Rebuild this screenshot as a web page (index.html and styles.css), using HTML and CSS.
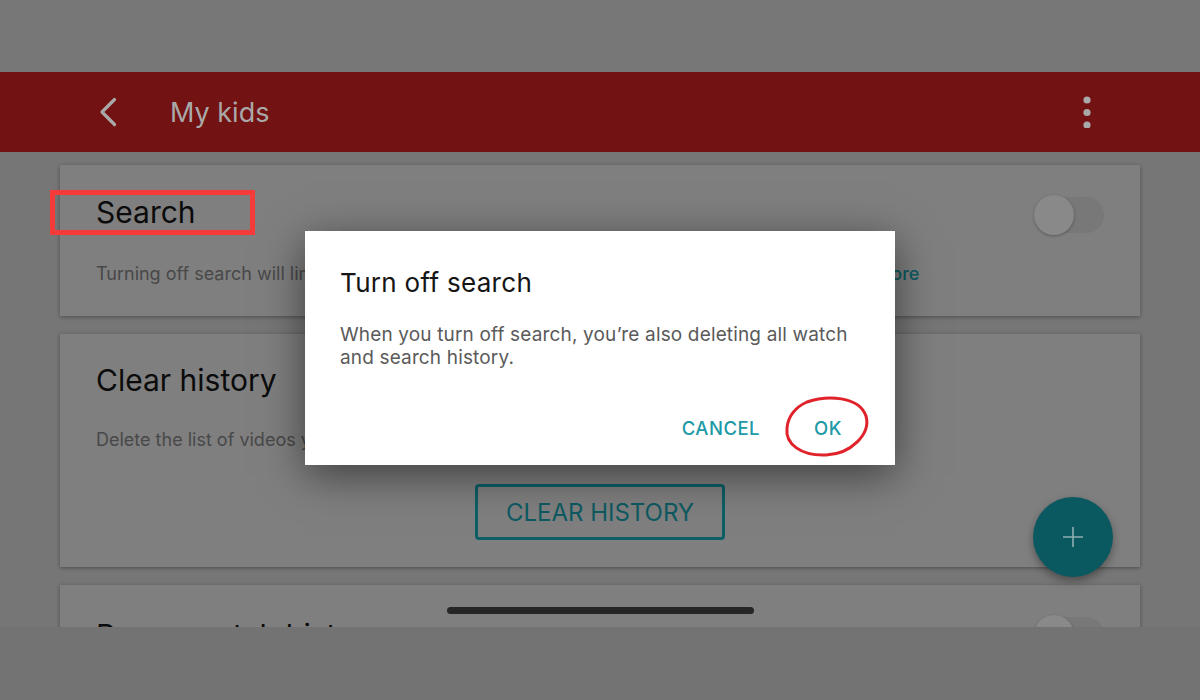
FILE: index.html
```html
<!DOCTYPE html>
<html lang="en">
<head>
    <meta charset="UTF-8">
    <meta name="viewport" content="width=device-width, initial-scale=1.0">
    <title>My kids</title>
    <link rel="stylesheet" href="styles.css">
</head>
<body>
    <div class="status"></div>

    <div class="screen">
        <header class="appbar">
            <svg class="back" viewBox="0 0 20 30" width="20" height="30">
                <path d="M16.5 2.5 L4 15 L16.5 27.5" fill="none" stroke="currentColor" stroke-width="3.2" stroke-linecap="round" stroke-linejoin="round"/>
            </svg>
            <h1>My kids</h1>
            <svg class="menu" viewBox="0 0 8 32" width="8" height="32">
                <circle cx="4" cy="4" r="3.6" fill="currentColor"/>
                <circle cx="4" cy="16.5" r="3.6" fill="currentColor"/>
                <circle cx="4" cy="29" r="3.6" fill="currentColor"/>
            </svg>
        </header>

        <main class="cards">
            <section class="card">
                <div class="card-head">
                    <h2 class="card-title">Search<span class="mark-box"></span></h2>
                    <div class="toggle"></div>
                </div>
                <p class="card-desc">Turning off search will limit your child to a smaller set of recommended videos alone. <span class="link">Learn more</span></p>
            </section>

            <section class="card card-history">
                <h2 class="card-title">Clear history</h2>
                <p class="card-desc">Delete the list of videos your child has watched and searched for.</p>
                <button class="outline-btn">CLEAR HISTORY</button>
            </section>

            <section class="card card-pause">
                <div class="card-head">
                    <h2 class="card-title">Pause watch history</h2>
                    <div class="toggle"></div>
                </div>
                <p class="card-desc">Videos your child watches won't be added to their watch history.</p>
            </section>
        </main>

        <button class="fab">
            <svg viewBox="0 0 22 22" width="22" height="22">
                <path d="M11 1 V21 M1 11 H21" stroke="currentColor" stroke-width="1.6"/>
            </svg>
        </button>

        <div class="home-bar"></div>

        <div class="dialog">
            <h2>Turn off search</h2>
            <p>When you turn off search, you’re also deleting all watch and search history.</p>
            <div class="actions">
                <button>CANCEL</button>
                <button class="ok">OK
                    <svg class="mark-ring" viewBox="0 0 90 66" width="90" height="66">
                        <path d="M24 8 C44 1, 76 2, 83 22 C88 40, 68 60, 43 61 C18 62, 2 50, 4 34 C5 22, 13 13, 23 8.5" fill="none" stroke="#e0222b" stroke-width="3" stroke-linecap="round"/>
                    </svg>
                </button>
            </div>
        </div>
    </div>

    <div class="bottom"></div>
</body>
</html>
```

FILE: styles.css
```css
body {
    margin: 0;
    width: 1200px;
    height: 700px;
    overflow: hidden;
    background: #777;
    font-family: Inter, "Noto Sans", sans-serif;
}
.status {
    height: 72px;
    background: #777;
}
.screen {
    position: relative;
    height: 555px;
    overflow: hidden;
    background: #767676;
}
.appbar {
    height: 80px;
    display: flex;
    align-items: center;
    padding-left: 98px;
    background: #731212;
    color: #a9a9a9;
}
.appbar h1 {
    margin: 0 0 0 52px;
    font-size: 27px;
    font-weight: 400;
}
.menu {
    margin-left: auto;
    margin-right: 109px;
}
.cards {
    display: flex;
    flex-direction: column;
    gap: 18px;
    padding: 13px 60px 0;
}
.card {
    background: #7f7f7f;
    box-shadow: 0 1px 4px rgba(0, 0, 0, 0.35);
    padding: 29px 36px 30px;
}
.card-history {
    padding: 28px 36px 27px;
}
.card-pause {
    padding-top: 32px;
}
.card-pause .toggle {
    margin-top: 0;
}
.card-head {
    display: flex;
    align-items: flex-start;
    justify-content: space-between;
}
.card-title {
    position: relative;
    margin: 0;
    font-size: 30px;
    line-height: 36px;
    font-weight: 400;
    color: #0b0b0b;
}
.card-desc {
    margin: 29px 0 0;
    font-size: 18px;
    line-height: 24px;
    color: #484848;
    white-space: nowrap;
}
.card-history .card-desc {
    margin-top: 30px;
}
.link {
    color: #0d5a62;
    font-weight: 500;
}
.toggle {
    position: relative;
    width: 70px;
    height: 36px;
    margin-top: 3px;
    border-radius: 18px;
    background: #787878;
}
.toggle::before {
    content: "";
    position: absolute;
    left: 0;
    top: -2px;
    width: 40px;
    height: 40px;
    border-radius: 50%;
    background: #898989;
    box-shadow: 0 1px 3px rgba(0, 0, 0, 0.3);
}
.outline-btn {
    display: block;
    width: 250px;
    height: 56px;
    margin: 32px auto 0;
    border: 3px solid #0d5f66;
    border-radius: 4px;
    background: none;
    color: #0e5a61;
    font-family: Inter, "Noto Sans", sans-serif;
    font-size: 24px;
}
.mark-box {
    position: absolute;
    left: -46px;
    top: -4px;
    width: 205px;
    height: 45px;
    box-sizing: border-box;
    border: 5px solid #f53a3a;
}
.fab {
    position: absolute;
    left: 1033px;
    top: 425px;
    width: 80px;
    height: 80px;
    display: flex;
    align-items: center;
    justify-content: center;
    border: none;
    border-radius: 50%;
    background: #0a5860;
    color: #8eaeb1;
    box-shadow: 0 4px 8px rgba(0, 0, 0, 0.35);
}
.home-bar {
    position: absolute;
    left: 447px;
    top: 535px;
    width: 307px;
    height: 7px;
    border-radius: 4px;
    background: #262626;
}
.dialog {
    position: absolute;
    left: 305px;
    top: 159px;
    width: 590px;
    height: 234px;
    box-sizing: border-box;
    padding: 36px 0 0 35px;
    background: #fff;
    box-shadow: 0 10px 40px rgba(0, 0, 0, 0.5);
}
.dialog h2 {
    margin: 0;
    font-size: 26px;
    line-height: 32px;
    font-weight: 400;
    letter-spacing: 0.3px;
    color: #151515;
}
.dialog p {
    margin: 24px 35px 0 0;
    font-size: 19px;
    line-height: 23px;
    letter-spacing: 0.15px;
    color: #5a5a5a;
}
.actions {
    display: flex;
    justify-content: flex-end;
    margin-top: 35px;
    padding-right: 26px;
}
.actions button {
    position: relative;
    height: 48px;
    padding: 0 27px;
    border: none;
    background: none;
    color: #1c9aa6;
    font-family: Inter, "Noto Sans", sans-serif;
    font-size: 18.5px;
    font-weight: 500;
    letter-spacing: 0.5px;
}
.mark-ring {
    position: absolute;
    left: -4px;
    top: -10px;
    overflow: visible;
}
.bottom {
    height: 73px;
    background: #737373;
}
```
